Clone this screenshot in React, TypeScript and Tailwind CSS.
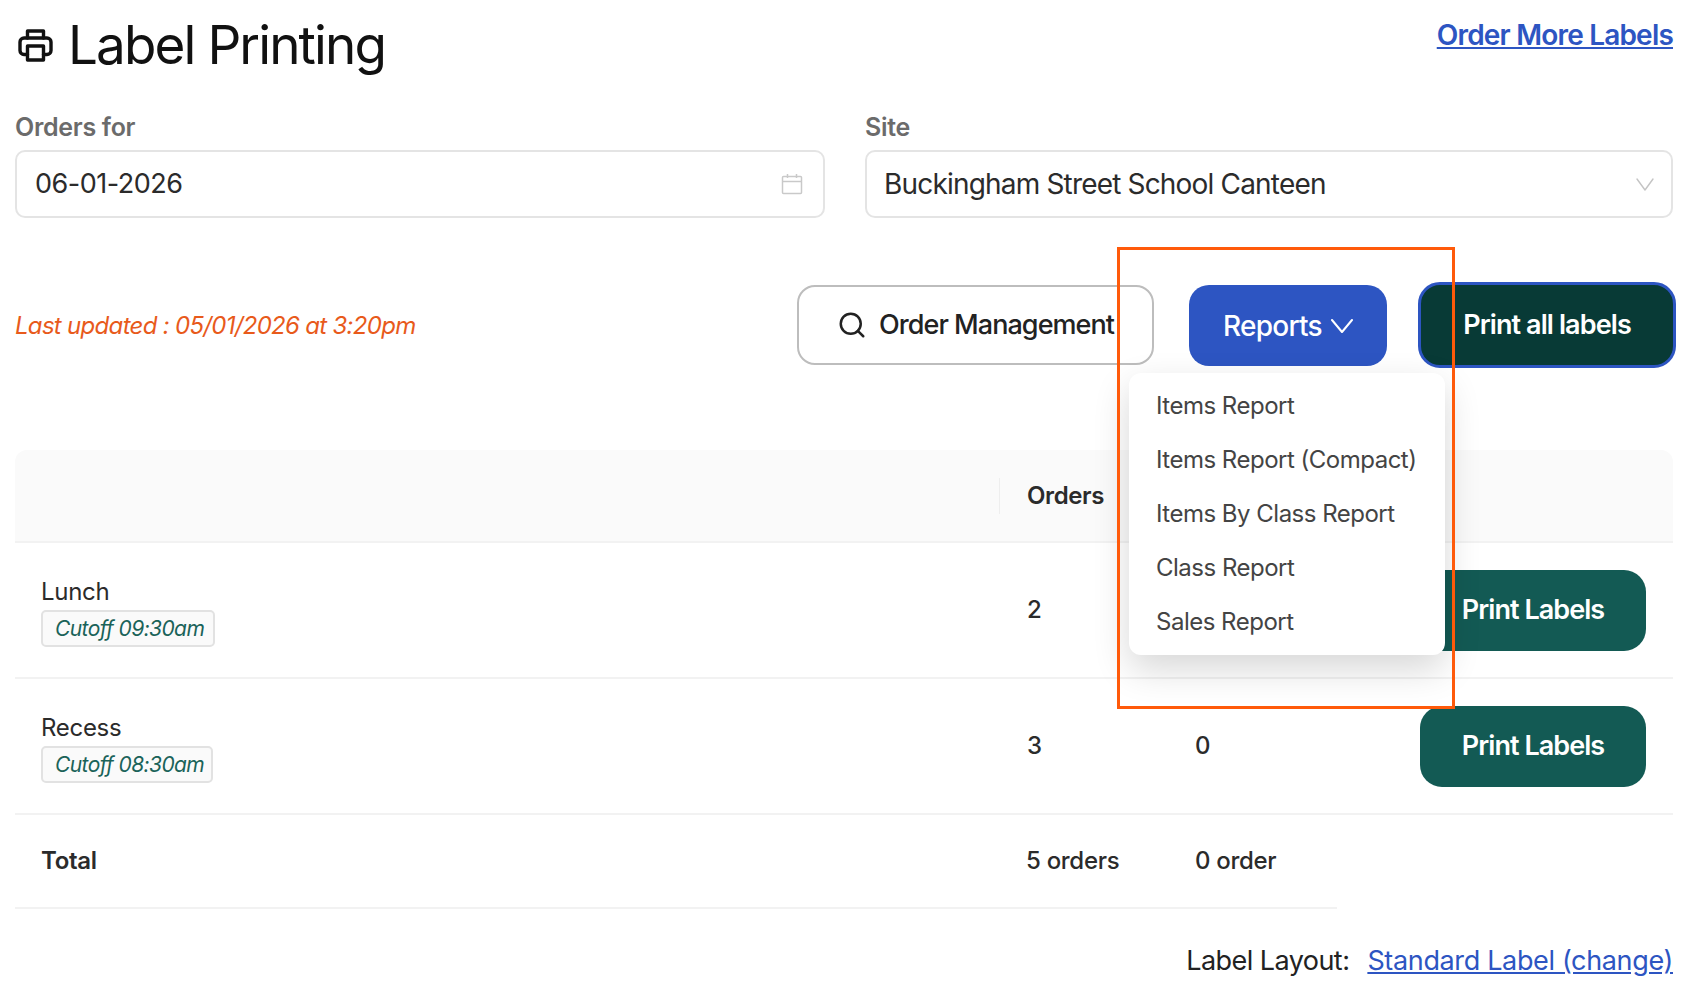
import { Search } from 'lucide-react';

const reportItems = ['Items Report', 'Items Report (Compact)', 'Items By Class Report', 'Class Report', 'Sales Report'];

const rows = [
  { name: 'Lunch', cutoff: 'Cutoff 09:30am', orders: '2', printed: '', badge: 'w-[174px]' },
  { name: 'Recess', cutoff: 'Cutoff 08:30am', orders: '3', printed: '0', badge: 'w-[172px]' },
];

function PrinterIcon() {
  return (
    <svg width="36" height="36" viewBox="0 0 36 36" fill="none" stroke="#111" strokeWidth="3.4" strokeLinejoin="round" strokeLinecap="round">
      <path d="M9.5 10V3h16v7" />
      <path d="M9.5 26.5H6a4 4 0 0 1-4-4V14a4 4 0 0 1 4-4h23a4 4 0 0 1 4 4v8.5a4 4 0 0 1-4 4h-3.5" />
      <path d="M9.5 18h16v14h-16z" />
    </svg>
  );
}

function CalendarIcon() {
  return (
    <svg width="22" height="22" viewBox="0 0 22 22" fill="none" stroke="#c9c9c9" strokeWidth="1.5">
      <rect x="1.5" y="3.5" width="19" height="17" rx="1" />
      <path d="M1.5 8.5h19M6.5 1v4M15.5 1v4" />
    </svg>
  );
}

// thin open V used by the select and the Reports button
function VeeIcon({ width, height, color, stroke }: { width: number; height: number; color: string; stroke: number }) {
  return (
    <svg width={width} height={height} viewBox={`0 0 ${width} ${height}`} fill="none" stroke={color} strokeWidth={stroke} strokeLinecap="round" strokeLinejoin="round">
      <path d={`M1 1L${width / 2} ${height - 1}L${width - 1} 1`} />
    </svg>
  );
}

export default function App() {
  return (
    <div className="relative w-[1704px] h-[1005px] overflow-hidden bg-white pl-[15px] pr-[31px] font-['Inter','Noto_Sans',sans-serif] text-[#2b2b2b]">
      {/* header */}
      <div className="flex justify-between h-[114px]">
        <div className="flex items-center gap-[14px] h-[91px] pl-[3px]">
          <PrinterIcon />
          <h1 className="text-[53px] leading-none tracking-[-1.9px] text-[#111]">Label Printing</h1>
        </div>
        <a className="mt-[19px] h-[32px] text-[28px] leading-[32px] font-semibold tracking-[-0.8px] text-[#2d55c2] underline">Order More Labels</a>
      </div>

      {/* filters */}
      <div className="flex justify-between">
        <div className="w-[810px]">
          <label className="block h-[26px] text-[25px] leading-[26px] font-semibold tracking-[-0.3px] text-[#6b6b6b]">Orders for</label>
          <div className="mt-[10px] flex items-center justify-between h-[68px] pl-[18px] pr-[20px] rounded-[10px] border-2 border-[#e4e4e4] text-[27px] tracking-[-0.5px]">
            <span className="pt-[1px]">06-01-2026</span>
            <CalendarIcon />
          </div>
        </div>
        <div className="w-[808px]">
          <label className="block h-[26px] text-[25px] leading-[26px] font-semibold tracking-[-0.3px] text-[#6b6b6b]">Site</label>
          <div className="mt-[10px] flex items-center justify-between h-[68px] pl-[17px] pr-[17px] rounded-[10px] border-2 border-[#e4e4e4] text-[28px] tracking-[-0.82px]">
            Buckingham Street School Canteen
            <VeeIcon width={18} height={13} color="#c4c4c4" stroke={1.4} />
          </div>
        </div>
      </div>

      {/* actions */}
      <div className="mt-[64px] -mr-[3px] flex items-center justify-between h-[86px]">
        <span className="pt-[2px] text-[24px] italic tracking-[-0.7px] text-[#e85a1b]">Last updated : 05/01/2026 at 3:20pm</span>
        <div className="flex items-center">
          <button className="flex items-center gap-[12px] w-[357px] h-[80px] pl-[38px] rounded-[18px] border-2 border-[#bdbdbd] text-[27px] font-medium tracking-[-0.95px] text-[#222]">
            <Search size={30} strokeWidth={2} color="#222" />
            Order Management
          </button>
          <div className="relative ml-[35px]">
            <button className="flex items-center justify-center gap-[9px] w-[198px] h-[81px] pt-[2px] rounded-[20px] bg-[#2d55c2] text-[28px] font-medium tracking-[-0.75px] text-white">
              Reports
              <VeeIcon width={22} height={14} color="#ffffff" stroke={2} />
            </button>
            <div className="absolute z-10 left-[-60px] top-[88px] w-[316px] h-[282px] py-[6px] rounded-[12px] bg-white shadow-[0_14px_36px_rgba(0,0,0,0.16)]">
              {reportItems.map((item) => (
                <div key={item} className="flex items-center h-[54px] pl-[27px] text-[24px] tracking-[-0.5px] text-[#444]">
                  {item}
                </div>
              ))}
            </div>
          </div>
          <button className="ml-[31px] w-[258px] h-[86px] rounded-[22px] border-[3px] border-[#2d55c2] bg-[#083a36] text-[27px] font-semibold tracking-[-0.9px] text-white">
            Print all labels
          </button>
        </div>
      </div>

      {/* table */}
      <div className="mt-[82px]">
        <div className="grid grid-cols-[985px_169px_1fr] items-center h-[93px] rounded-t-[12px] border-b-2 border-[#f2f2f2] bg-[#fafafa]">
          <div className="h-[36px] border-r border-[#eeeeee]" />
          <div className="pl-[27px] text-[24px] font-semibold tracking-[-0.4px]">Orders</div>
        </div>
        {rows.map((row) => (
          <div key={row.name} className="grid grid-cols-[985px_169px_1fr] items-center h-[136px] border-b-2 border-[#f2f2f2]">
            <div className="pl-[26px] pt-[4px]">
              <div className="text-[24px] leading-[30px] tracking-[-0.3px]">{row.name}</div>
              <div className={`mt-[3px] flex items-center h-[37px] pl-[12px] rounded-[5px] border-2 border-[#e2e2e2] bg-[#fafafa] text-[21px] italic tracking-[-0.6px] text-[#1a6359] ${row.badge}`}>
                {row.cutoff}
              </div>
            </div>
            <div className="pl-[27px] text-[24px] font-medium">{row.orders}</div>
            <div className="flex items-center justify-between pl-[26px] pr-[27px] text-[24px] font-medium">
              <span>{row.printed}</span>
              <button className="w-[226px] h-[81px] rounded-[22px] bg-[#135a54] text-[27px] font-semibold tracking-[-0.95px] text-white">
                Print Labels
              </button>
            </div>
          </div>
        ))}
        <div className="w-[1322px] border-b-2 border-[#f2f2f2]">
          <div className="grid grid-cols-[985px_169px_1fr] items-center h-[92px] text-[24px] font-semibold tracking-[-0.3px]">
            <div className="pl-[26px]">Total</div>
            <div className="pl-[26px] font-medium">5 orders</div>
            <div className="pl-[26px] font-medium">0 order</div>
          </div>
        </div>
      </div>

      {/* footer */}
      <div className="mt-[32px] flex justify-end items-center gap-[18px] text-[27px]">
        <span className="tracking-[-0.55px] text-[#222]">Label Layout:</span>
        <a className="tracking-[-0.35px] text-[#2d55c2] underline">Standard Label (change)</a>
      </div>

      {/* annotation box */}
      <div className="absolute z-20 left-[1117px] top-[247px] w-[338px] h-[462px] border-[3px] border-[#ff5a0a] pointer-events-none" />
    </div>
  );
}
